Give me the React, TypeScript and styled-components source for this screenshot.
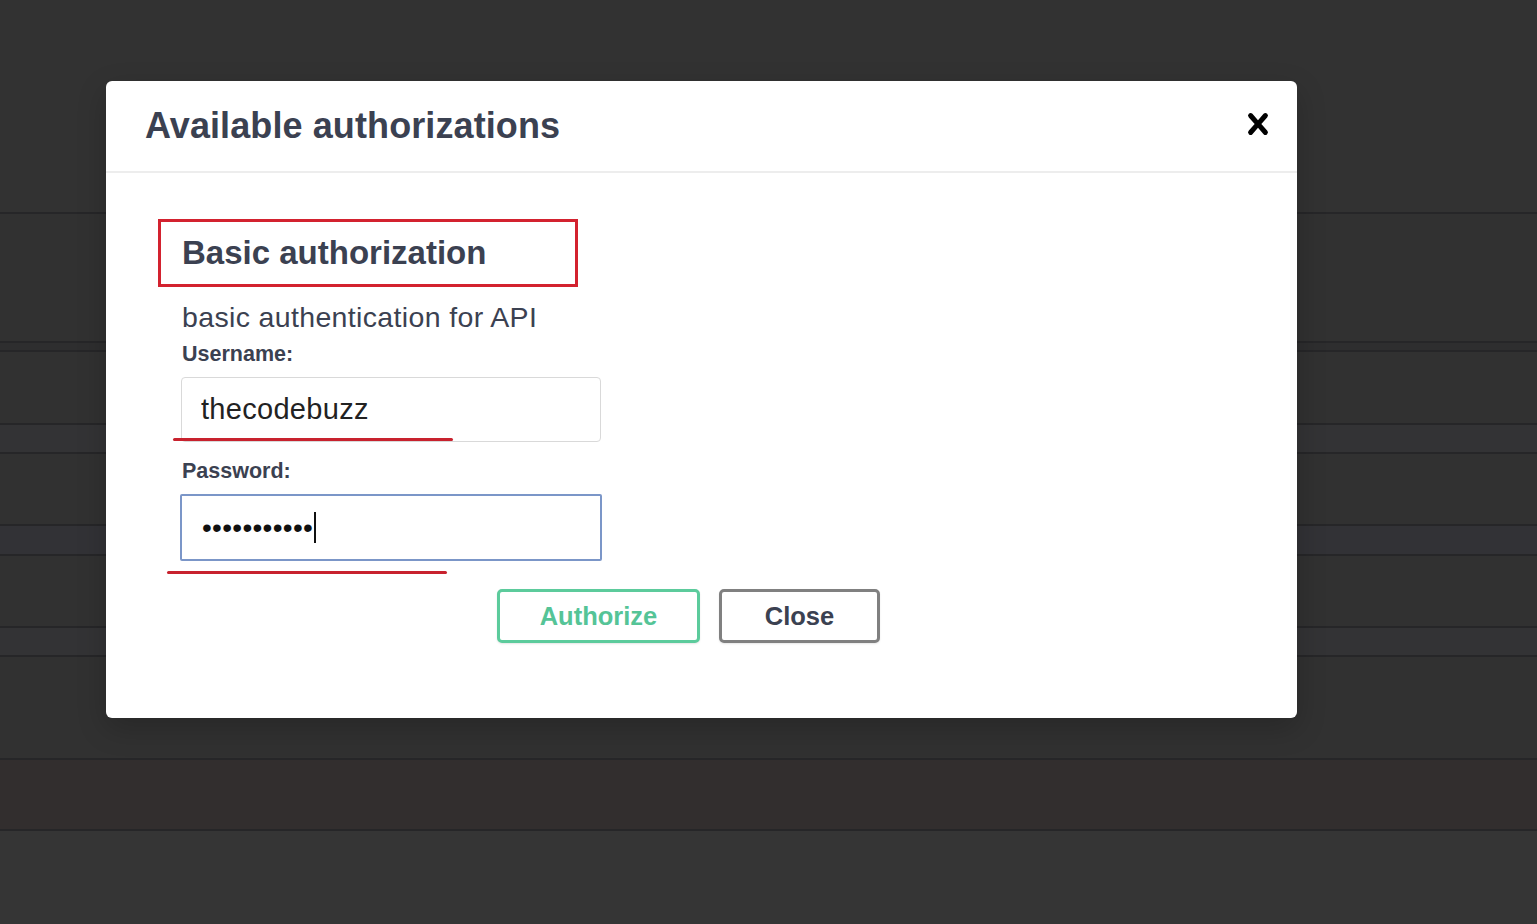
import React from "react";
import styled, { createGlobalStyle } from "styled-components";

const GlobalStyle = createGlobalStyle`
  html, body {
    margin: 0;
    padding: 0;
    background: #323232;
  }
  body {
    font-family: "Liberation Sans", Arial, sans-serif;
  }
`;

interface bandProps {
  h: number;
  tone: string;
  last?: boolean;
}

const Page = styled.div`
  position: relative;
  width: 1537px;
  height: 924px;
  overflow: hidden;
  background: #323232;
`;

// the swagger page behind the overlay, only faint row borders are visible
const Backdrop = styled.div`
  display: flex;
  flex-direction: column;
  height: 100%;
`;

const Band = styled.div<bandProps>`
  box-sizing: border-box;
  height: ${({ h }) => h}px;
  flex: ${({ last }) => (last ? "1" : "none")};
  background: ${({ tone }) => tone};
  border-bottom: ${({ last }) => (last ? "none" : "2px solid #262628")};
`;

const Modal = styled.div`
  position: absolute;
  left: 106px;
  top: 81px;
  width: 1191px;
  background: #fff;
  border-radius: 6px;
  box-shadow: 0 10px 30px rgba(0, 0, 0, 0.2);
`;

const Header = styled.div`
  display: flex;
  align-items: center;
  justify-content: space-between;
  height: 90px;
  padding: 0 18px 0 39px;
  border-bottom: 2px solid #ededed;
`;

const Title = styled.h3`
  margin: 0;
  font-size: 36px;
  font-weight: 700;
  color: #3b4151;
  letter-spacing: 0.1px;
`;

const CloseIcon = styled.button`
  display: flex;
  padding: 0;
  border: none;
  background: none;
  cursor: pointer;
  margin-top: -4px;
`;

const Body = styled.div`
  padding: 46px 0 75px 76px;
`;

const SchemeTitle = styled.h4`
  box-sizing: border-box;
  display: flex;
  align-items: center;
  width: 420px;
  height: 68px;
  margin: 0 0 0 -24px;
  padding: 0 21px;
  border: 3px solid #d3222f;
  font-size: 33px;
  font-weight: 700;
  color: #3b4151;
`;

const Description = styled.p`
  margin: 14px 0 0;
  font-size: 28.5px;
  line-height: 32px;
  color: #3b4151;
  letter-spacing: 0.35px;
`;

const Label = styled.label`
  display: block;
  font-size: 21.5px;
  line-height: 24px;
  font-weight: 700;
  color: #3b4151;
`;

const Field = styled.div<{ gap: number }>`
  position: relative;
  margin-top: ${({ gap }) => gap}px;
  width: fit-content;
`;

const TextInput = styled.input`
  box-sizing: border-box;
  display: block;
  width: 420px;
  height: 65px;
  margin: 0 0 0 -1px;
  padding: 0 19px;
  border: 1px solid #d9d9d9;
  border-radius: 4px;
  font-family: "Liberation Sans", Arial, sans-serif;
  font-size: 29px;
  letter-spacing: 0.3px;
  color: #222;
  background: #fff;
  outline: none;
`;

const PasswordBox = styled.div`
  box-sizing: border-box;
  display: flex;
  align-items: center;
  width: 422px;
  height: 67px;
  margin-left: -2px;
  padding: 0 20px;
  border: 2px solid #7b96c8;
  border-radius: 2px;
  font-size: 28px;
  letter-spacing: 0.3px;
  color: #111;
`;

const Caret = styled.span`
  display: inline-block;
  width: 2px;
  height: 31px;
  margin-left: 1px;
  background: #111;
`;

// red marker lines drawn over the screenshot
const Marker = styled.span<{ left: number; top: number }>`
  position: absolute;
  left: ${({ left }) => left}px;
  top: ${({ top }) => top}px;
  width: 280px;
  height: 3px;
  border-radius: 2px;
  background: #c8222e;
`;

const ButtonRow = styled.div`
  display: flex;
  gap: 19px;
  margin-top: 28px;
  padding-left: 315px;
`;

const Button = styled.button<{ variant: "authorize" | "close" }>`
  box-sizing: border-box;
  width: ${({ variant }) => (variant === "authorize" ? 203 : 161)}px;
  height: 54px;
  border: 3px solid
    ${({ variant }) => (variant === "authorize" ? "#5ccb9c" : "#808080")};
  border-radius: 5px;
  background: #fff;
  box-shadow: 0 1px 2px rgba(0, 0, 0, 0.1);
  font-family: "Liberation Sans", Arial, sans-serif;
  font-size: 25.5px;
  font-weight: 700;
  color: ${({ variant }) => (variant === "authorize" ? "#55c497" : "#3b4151")};
  cursor: pointer;
`;

const bands = [
  { h: 214, tone: "#323232" },
  { h: 129, tone: "#313131" },
  { h: 9, tone: "#2e2e2f" },
  { h: 73, tone: "#313131" },
  { h: 29, tone: "#333335" },
  { h: 72, tone: "#313131" },
  { h: 30, tone: "#323236" },
  { h: 72, tone: "#313131" },
  { h: 29, tone: "#333335" },
  { h: 103, tone: "#313131" },
  { h: 71, tone: "#322e2e" },
];

function App() {
  return (
    <>
      <GlobalStyle />
      <Page>
        <Backdrop>
          {bands.map((b, i) => (
            <Band key={i} h={b.h} tone={b.tone} />
          ))}
          <Band h={0} tone="#353535" last />
        </Backdrop>

        <Modal>
          <Header>
            <Title>Available authorizations</Title>
            <CloseIcon aria-label="Close">
              <svg width="42" height="42" viewBox="0 0 20 20">
                <path
                  fill="#000"
                  d="M14.348 14.849a1.2 1.2 0 0 1-1.697 0L10 11.819l-2.651 3.029a1.2 1.2 0 1 1-1.697-1.697l2.758-3.15-2.759-3.152a1.2 1.2 0 1 1 1.697-1.697L10 8.183l2.651-3.031a1.2 1.2 0 1 1 1.697 1.697l-2.758 3.152 2.758 3.15a1.2 1.2 0 0 1 0 1.698z"
                />
              </svg>
            </CloseIcon>
          </Header>

          <Body>
            <SchemeTitle>Basic authorization</SchemeTitle>
            <Description>basic authentication for API</Description>

            <Field gap={9}>
              <Label>Username:</Label>
            </Field>
            <Field gap={11}>
              <TextInput type="text" defaultValue="thecodebuzz" readOnly />
              <Marker left={-9} top={61} />
            </Field>

            <Field gap={17}>
              <Label>Password:</Label>
            </Field>
            <Field gap={11}>
              <PasswordBox role="textbox">
                {"•".repeat(11)}
                <Caret />
              </PasswordBox>
              <Marker left={-15} top={77} />
            </Field>

            <ButtonRow>
              <Button variant="authorize">Authorize</Button>
              <Button variant="close">Close</Button>
            </ButtonRow>
          </Body>
        </Modal>
      </Page>
    </>
  );
}

export default App;
